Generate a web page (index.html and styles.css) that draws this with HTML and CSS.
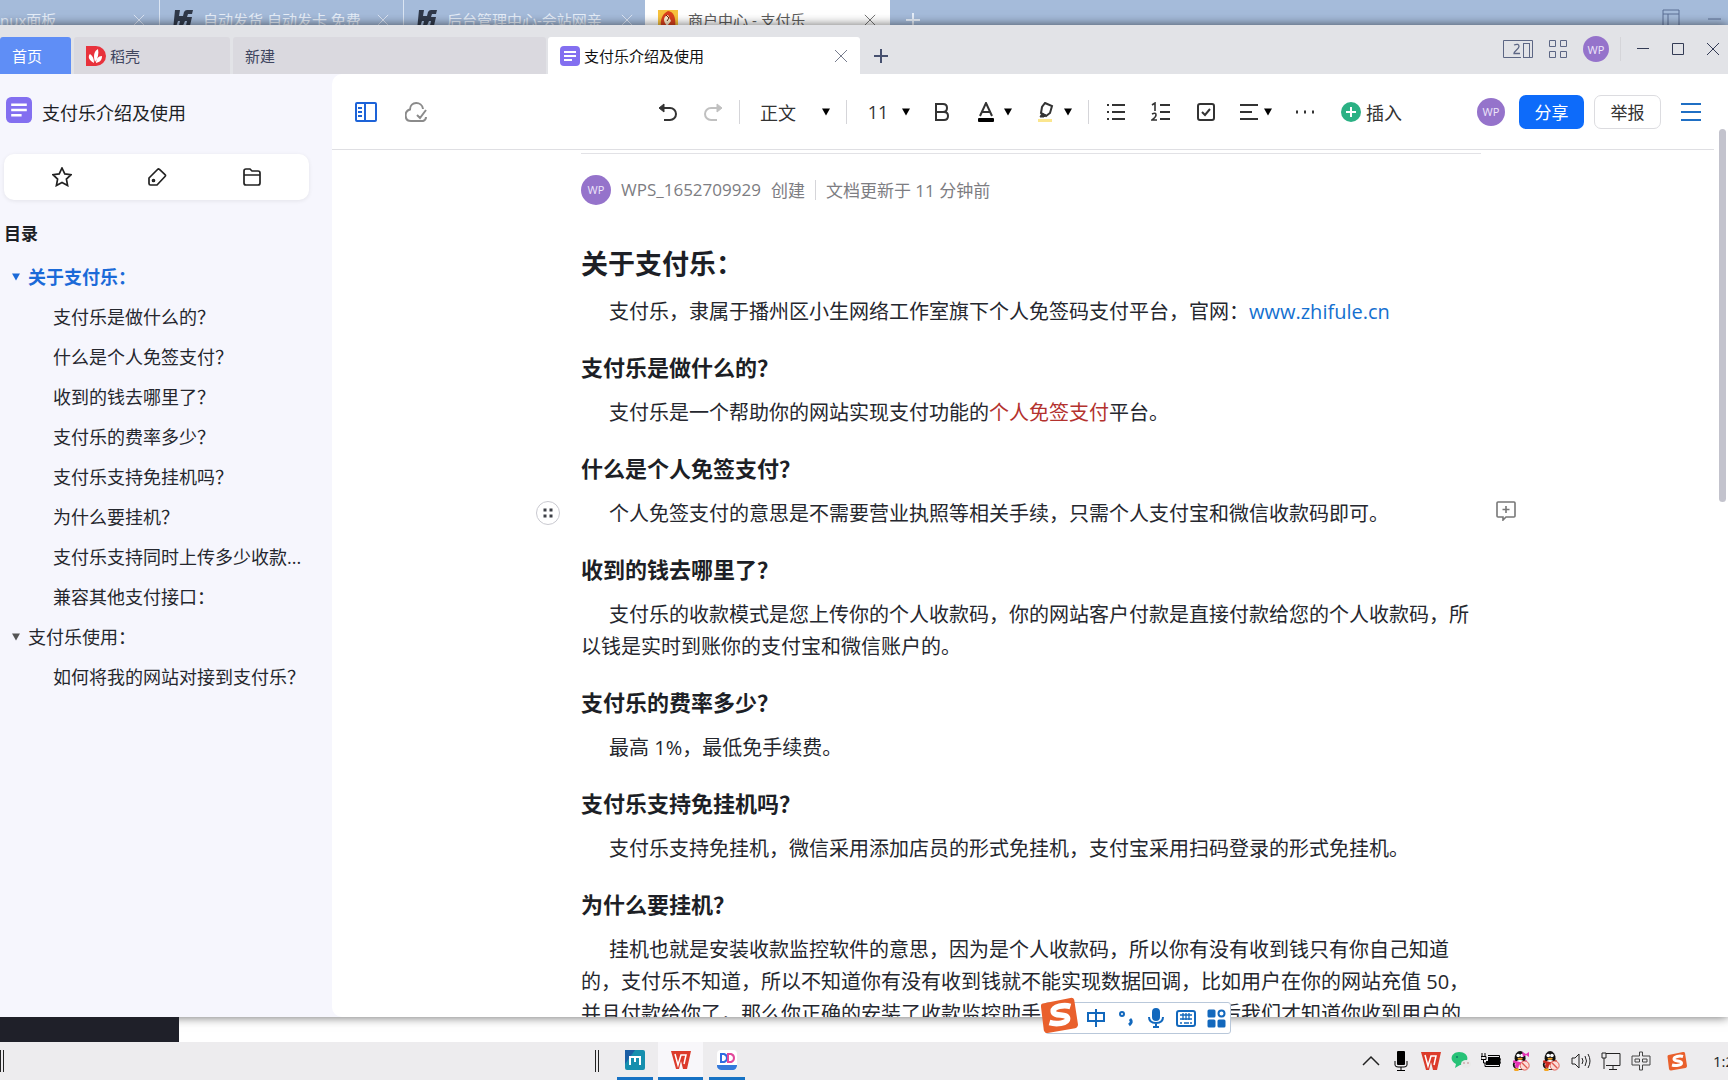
FILE: index.html
```html
<!DOCTYPE html>
<html lang="zh-CN">

<head>
    <meta charset="UTF-8" />
    <meta name="viewport" content="width=device-width, initial-scale=1.0" />
    <title>支付乐介绍及使用</title>
    <link rel="stylesheet" href="styles.css">
</head>

<body>

    <!-- shared icon shapes -->
    <svg class="sprite" aria-hidden="true">
        <symbol id="doc" viewBox="0 0 20 20">
            <rect width="20" height="20" rx="4" fill="#836ff0" />
            <path d="M4 6h12M4 10h12M4 14h8" stroke="#fff" stroke-width="2" />
        </symbol>
        <symbol id="close" viewBox="0 0 14 14">
            <path d="M1 1l12 12M13 1L1 13" fill="none" stroke="currentColor" />
        </symbol>
        <symbol id="plus" viewBox="0 0 14 14">
            <path d="M7 0v14M0 7h14" fill="none" stroke="currentColor" stroke-width="2" />
        </symbol>
        <symbol id="hf" viewBox="0 0 20 20">
            <path d="M2 0h5L6 6h4l1-4q1-2 3-2h6l-1 4h-4l-1 3h5l-3 13h-4l2-9h-2l-4 9H5l2-9H5l-3 9H0z" fill="#30394a" />
        </symbol>
        <symbol id="caret" viewBox="0 0 8 8">
            <path d="M0 .5h8l-4 7z" fill="currentColor" />
        </symbol>
        <symbol id="sogou" viewBox="0 0 40 38">
            <path d="M3 7L32 1q3-1 4 2l4 26q0 3-3 4L8 38q-3 0-4-3L1 10q0-3 2-3z" fill="#e9602c" />
            <path d="M32 10c-7-2-18 0-18 5 0 6 15 2 15 8 0 5-12 6-19 4" fill="none" stroke="#fff" stroke-width="6" />
        </symbol>
        <symbol id="wps" viewBox="0 0 20 20">
            <path d="M0 1h20l-4 18h-4L10 11l-2 8H5z" fill="#dc3b2b" />
            <path d="M4 4l3 11 3-10h5l-2 9" fill="none" stroke="#fff" stroke-width="1.5" />
        </symbol>
        <symbol id="penguin" viewBox="0 0 20 22">
            <ellipse cx="9" cy="8" rx="6" ry="8" fill="#111" />
            <ellipse cx="9" cy="15" rx="8" ry="6" fill="#111" />
            <ellipse cx="9" cy="15" rx="6" ry="5" fill="#fff" />
            <path d="M2 10q7 4 14 0l1 3q-5 3-9 2l-1 4-4-1 1-4-3-2z" fill="currentColor" />
            <circle cx="7" cy="5" r="2" fill="#fff" />
            <circle cx="11" cy="5" r="2" fill="#fff" />
            <ellipse cx="9" cy="8.5" rx="3" ry="1" fill="#f5a623" />
            <path d="M2 20q3-2 6 0l-1 2H3z" fill="#f5a623" />
            <circle cx="14" cy="16" r="5" fill="#fbdcd8" stroke="#e2574c" />
            <path d="M11 13l6 6" stroke="#e2574c" stroke-width="1.5" />
        </symbol>
    </svg>

    <div class="browser">
        <div class="browser-tab first"><span>nux面板</span><svg><use href="#close" /></svg></div>
        <div class="browser-tab second"><svg class="favicon"><use href="#hf" /></svg><span>自动发货 自动发卡 免费</span><svg><use href="#close" /></svg></div>
        <div class="browser-tab third"><svg class="favicon"><use href="#hf" /></svg><span>后台管理中心-会站网亲</span><svg><use href="#close" /></svg></div>
        <div class="browser-tab active">
            <svg class="favicon" viewBox="0 0 20 20">
                <rect width="20" height="20" fill="#f7c13c" />
                <path d="M10 1c7 1 8 8 7 19H4C1 11 4 4 10 1z" fill="#d9401c" />
                <path d="M10 5c-4 1-5 5-3 8l2 3 4-5z" fill="#fff0cf" />
                <path d="M8 5l3 3-2 3" stroke="#6b2415" fill="none" />
            </svg>
            <span>商户中心 - 支付乐</span><svg><use href="#close" /></svg>
        </div>
        <svg class="browser-plus"><use href="#plus" /></svg>
        <svg class="browser-panel" viewBox="0 0 60 16">
            <path d="M1 16V1h16v15M1 5h16M6 5v11M46 10h13" fill="none" stroke="#5a6f94" />
        </svg>
    </div>

    <div class="window">
        <header class="tabs">
            <button class="tab home">首页</button>
            <button class="tab docer">
                <svg viewBox="0 0 20 20">
                    <path d="M0 0h10a10 10 0 0 1 0 20H0z" fill="#e8323c" />
                    <path d="M8 17C2 14 2 10 4 8c3 2 4 5 4 9zM9 16C7 10 8 5 12 3c1 5 0 9-3 13zM10 17c0-4 2-7 6-7 0 4-2 6-6 7z" fill="#fff" />
                </svg>
                稻壳
            </button>
            <button class="tab new">新建</button>
            <div class="tab current">
                <svg><use href="#doc" /></svg>
                <span>支付乐介绍及使用</span>
                <button class="icon-button" aria-label="关闭标签"><svg><use href="#close" /></svg></button>
            </div>
            <button class="icon-button add" aria-label="新建标签"><svg><use href="#plus" /></svg></button>
            <div class="window-tools">
                <svg class="pages" viewBox="0 0 30 18" fill="none" stroke="#5c6684">
                    <path d="M18 17.5H.5V.5h29v17h-3" />
                    <rect x="20.5" y="3.5" width="6" height="14" />
                    <path d="M11 5q5-2 5 1.500C16 9 11 11 11 13.500h6" stroke-width="1.3" />
                </svg>
                <svg class="apps" viewBox="0 0 18 18" fill="none" stroke="#5c6684">
                    <path d="M.5.5h6v6h-6zM11.500.5h6v6h-6zM.5 11.500h6v6h-6zM11.500 11.500h6v6h-6z" />
                </svg>
                <span class="avatar small">WP</span>
                <span class="line"></span>
                <button class="icon-button" aria-label="最小化"><svg viewBox="0 0 14 14"><path d="M1 6.5h12" stroke="#333b55" /></svg></button>
                <button class="icon-button" aria-label="最大化"><svg viewBox="0 0 14 14"><path d="M1.5 1.500h11v11h-11z" fill="none" stroke="#333b55" /></svg></button>
                <button class="icon-button" aria-label="关闭"><svg><use href="#close" /></svg></button>
            </div>
        </header>

        <div class="main">
            <aside class="sidebar">
                <div class="doc-name">
                    <svg><use href="#doc" /></svg>
                    <span>支付乐介绍及使用</span>
                </div>
                <div class="quick">
                    <button class="icon-button" aria-label="收藏">
                        <svg viewBox="0 0 20 20"><path d="M10 1l2.800 5.900 6.200.8-4.600 4.400 1.200 6.400L10 15.400l-5.600 3.100 1.200-6.400L1 7.700l6.200-.8z" /></svg>
                    </button>
                    <button class="icon-button" aria-label="标签">
                        <svg viewBox="0 0 20 20"><path d="M2 11l8.500-8.500q1-1 2 0l5.500 5q1 1 0 2L10 18H3.500Q2 18 2 16.500z" /><circle cx="6.500" cy="13.500" r="1" /></svg>
                    </button>
                    <button class="icon-button" aria-label="文件夹">
                        <svg viewBox="0 0 20 20"><path d="M2 4q0-2 2-2h4l2 2h6q2 0 2 2v10q0 2-2 2H4q-2 0-2-2zM2 8h16" /></svg>
                    </button>
                </div>
                <h2 class="toc-title">目录</h2>
                <nav class="toc">
                    <a class="group on" href="#about"><svg><use href="#caret" /></svg>关于支付乐：</a>
                    <a href="#what">支付乐是做什么的？</a>
                    <a href="#personal">什么是个人免签支付？</a>
                    <a href="#money">收到的钱去哪里了？</a>
                    <a href="#fee">支付乐的费率多少？</a>
                    <a href="#free">支付乐支持免挂机吗？</a>
                    <a href="#why">为什么要挂机？</a>
                    <a href="#about">支付乐支持同时上传多少收款...</a>
                    <a href="#about">兼容其他支付接口：</a>
                    <a class="group" href="#about"><svg><use href="#caret" /></svg>支付乐使用：</a>
                    <a href="#about">如何将我的网站对接到支付乐？</a>
                </nav>
            </aside>

            <section class="editor">
                <div class="toolbar">
                    <div class="left">
                        <button class="icon-button" aria-label="目录栏">
                            <svg viewBox="0 0 22 20" fill="none" stroke="#1d63d8" stroke-width="2">
                                <rect x="1" y="1" width="20" height="18" rx="1" />
                                <path d="M10 1v18M3 6h4M3 10h4M3 14h4" />
                            </svg>
                        </button>
                        <button class="icon-button" aria-label="已保存">
                            <svg viewBox="0 0 22 20" fill="none" stroke="#8b8b8b" stroke-width="2">
                                <path d="M18 7C17-1 5-1 5 7.500-1 9-1 19 6 19h12q3-1 3-4M12 13l3 3 6-8" />
                            </svg>
                        </button>
                    </div>
                    <div class="format">
                        <button class="tool" aria-label="撤销">
                            <svg viewBox="0 0 20 20"><path d="M3 6h9a6 6 0 0 1 0 12H6" /><path d="M1 6l5-4v8z" fill="#333" stroke-width="1" /></svg>
                        </button>
                        <button class="tool faded" aria-label="重做">
                            <svg viewBox="0 0 20 20"><path d="M17 6H8a6 6 0 0 0 0 12h6" /><path d="M19 6l-5-4v8z" fill="#333" stroke-width="1" /></svg>
                        </button>
                        <span class="line"></span>
                        <button class="drop style">正文<svg class="caret"><use href="#caret" /></svg></button>
                        <span class="line"></span>
                        <button class="drop size">11<svg class="caret"><use href="#caret" /></svg></button>
                        <button class="tool" aria-label="加粗">
                            <svg viewBox="0 0 20 20"><path d="M4 2h7q4 0 4 4t-4 4H4zM4 10h8q4 0 4 4t-4 4H4z" /></svg>
                        </button>
                        <button class="drop" aria-label="文字颜色">
                            <svg viewBox="0 0 20 20"><path d="M4 14L10 1l6 13M6 10h8" /><rect x="2" y="16" width="16" height="4" rx="1" fill="#000" stroke="none" /></svg>
                            <svg class="caret"><use href="#caret" /></svg>
                        </button>
                        <button class="drop" aria-label="突出显示">
                            <svg viewBox="0 0 20 20"><rect x="2" y="17" width="14" height="3" fill="#fbe68e" stroke="none" /><path d="M9 1l7 3-2 7-4 3-5-3 1-6z" /><path d="M6 11l-2 4h4l2-2z" fill="#333" stroke-width="1" /></svg>
                            <svg class="caret"><use href="#caret" /></svg>
                        </button>
                        <span class="line"></span>
                        <button class="tool" aria-label="项目符号">
                            <svg viewBox="0 0 20 20"><path d="M6 3h13M6 10h13M6 17h13M1 3h2M1 10h2M1 17h2" /></svg>
                        </button>
                        <button class="tool" aria-label="编号">
                            <svg viewBox="0 0 20 20"><path d="M9 3h10M9 10h10M9 17h10" /><path d="M1 3l3-2v8M1 12q4-2 4 1 0 2-4 5h5" stroke-width="1.6" /></svg>
                        </button>
                        <button class="tool" aria-label="待办">
                            <svg viewBox="0 0 20 20"><rect x="2" y="2" width="16" height="16" rx="2" /><path d="M6 10l3 3 5-6" /></svg>
                        </button>
                        <button class="drop align" aria-label="对齐">
                            <svg viewBox="0 0 20 20"><path d="M1 3h18M1 10h12M1 17h18" /></svg>
                            <svg class="caret"><use href="#caret" /></svg>
                        </button>
                        <button class="tool" aria-label="更多">
                            <svg viewBox="0 0 20 20"><path d="M1 10h2M9 10h2M17 10h2" stroke-width="3" /></svg>
                        </button>
                        <button class="insert">
                            <svg viewBox="0 0 20 20"><circle cx="10" cy="10" r="10" fill="#2bb184" /><path d="M10 5v10M5 10h10" stroke="#fff" stroke-width="2" /></svg>
                            插入
                        </button>
                    </div>
                    <div class="right">
                        <span class="avatar">WP</span>
                        <button class="share">分享</button>
                        <button class="report">举报</button>
                        <button class="icon-button" aria-label="菜单">
                            <svg viewBox="0 0 20 20"><path d="M0 2h20M0 10h20M0 18h20" stroke="#1f6fc4" stroke-width="2" /></svg>
                        </button>
                    </div>
                </div>

                <div class="page">
                    <article class="document">
                        <div class="meta">
                            <span class="avatar">WP</span>
                            <span class="author">WPS_1652709929</span>
                            <span>创建</span>
                            <span class="line"></span>
                            <span>文档更新于 11 分钟前</span>
                        </div>
                        <h1 id="about">关于支付乐：</h1>
                        <p>支付乐，隶属于播州区小生网络工作室旗下个人免签码支付平台，官网：<a href="#about">www.zhifule.cn</a></p>
                        <h2 id="what">支付乐是做什么的？</h2>
                        <p>支付乐是一个帮助你的网站实现支付功能的<em>个人免签支付</em>平台。</p>
                        <h2 id="personal">什么是个人免签支付？</h2>
                        <div class="block">
                            <button class="handle" aria-label="拖动段落">
                                <svg viewBox="0 0 24 24">
                                    <circle cx="12" cy="12" r="11.500" fill="#fff" stroke="#c9c9d0" />
                                    <path d="M7.500 9h3M13.500 9h3M7.500 15h3M13.500 15h3" stroke="#3c3f46" stroke-width="3" />
                                </svg>
                            </button>
                            <p>个人免签支付的意思是不需要营业执照等相关手续，只需个人支付宝和微信收款码即可。</p>
                            <button class="comment" aria-label="评论">
                                <svg viewBox="0 0 20 20" fill="none" stroke="#777" stroke-width="1.6">
                                    <path d="M2 1h16q1 0 1 1v13q0 1-1 1h-8l-3 3v-3H2q-1 0-1-1V2q0-1 1-1zM10 5v7M6.500 8.500h7" />
                                </svg>
                            </button>
                        </div>
                        <h2 id="money">收到的钱去哪里了？</h2>
                        <p>支付乐的收款模式是您上传你的个人收款码，你的网站客户付款是直接付款给您的个人收款码，所以钱是实时到账你的支付宝和微信账户的。</p>
                        <h2 id="fee">支付乐的费率多少？</h2>
                        <p>最高 1%，最低免手续费。</p>
                        <h2 id="free">支付乐支持免挂机吗？</h2>
                        <p>支付乐支持免挂机，微信采用添加店员的形式免挂机，支付宝采用扫码登录的形式免挂机。</p>
                        <h2 id="why">为什么要挂机？</h2>
                        <p>挂机也就是安装收款监控软件的意思，因为是个人收款码，所以你有没有收到钱只有你自己知道的，支付乐不知道，所以不知道你有没有收到钱就不能实现数据回调，比如用户在你的网站充值 50，并且付款给你了，那么你正确的安装了收款监控助手，并且正常的挂机以后我们才知道你收到用户的</p>
                    </article>
                </div>
                <span class="scrollbar"></span>
            </section>
        </div>
    </div>

    <div class="behind"><div class="dark"></div></div>

    <!-- floating input method bar -->
    <div class="ime">
        <svg class="ime-logo"><use href="#sogou" /></svg>
        <svg viewBox="0 0 20 20"><path d="M2 5h16v8H2zM10 1v18" /></svg>
        <svg viewBox="0 0 20 20"><circle cx="6" cy="6" r="2" /><path d="M14 11q3 3-1 6" stroke-width="3" /></svg>
        <svg viewBox="0 0 20 20"><rect x="7" y="1" width="6" height="11" rx="3" fill="#1268bd" /><path d="M3 9q0 6 7 6t7-6M10 15v4M7 19h6" /></svg>
        <svg viewBox="0 0 20 20"><rect x="1" y="3" width="18" height="15" rx="2" /><path d="M4 7h12M4 11h12M4 15h2M8 15h5M14 15h2M7 5v7M10 5v7M13 5v7" stroke-width="1.3" /></svg>
        <svg viewBox="0 0 20 20"><path d="M3 3h5v5H3zM3 13h5v5H3zM13 13h5v5h-5z" fill="#1268bd" stroke-width="3" stroke-linejoin="round" /><circle cx="15.500" cy="5.500" r="3" /></svg>
    </div>

    <footer class="taskbar">
        <span class="grip"></span>
        <span class="grip second-grip"></span>
        <button class="app" aria-label="浏览器">
            <svg viewBox="0 0 20 20"><rect width="20" height="20" rx="2" fill="#168fae" /><path d="M0 0h10L0 14z" fill="#1b5fa5" /><path d="M5 15V7h10v8M10 7v5" fill="none" stroke="#fff" stroke-width="2" /></svg>
        </button>
        <button class="app open" aria-label="WPS"><svg><use href="#wps" /></svg></button>
        <button class="app" aria-label="多多">
            <svg viewBox="0 0 20 20"><rect width="20" height="20" rx="4" fill="#fff" /><path d="M4 4h3q3 1 3 4t-3 4H4z" fill="none" stroke="#2f6be0" stroke-width="2" /><path d="M11 4h3q3 1 3 4t-3 4h-3z" fill="none" stroke="#e2489b" stroke-width="2" /><path d="M0 15h20v1q-1 4-4 4H4q-4-1-4-4z" fill="#3479da" /></svg>
        </button>
        <div class="tray">
            <svg viewBox="0 0 20 20"><path d="M2 14l8-8 8 8" stroke="#222" stroke-width="1.5" /></svg>
            <svg viewBox="0 0 20 20"><rect x="6" y="0" width="8" height="14" rx="1" fill="#000" /><path d="M4 10v4q0 2 3 2h6q3 0 3-2v-4M10 16v3M6 19.500h8" stroke="#000" /></svg>
            <svg><use href="#wps" /></svg>
            <svg viewBox="0 0 20 20"><path d="M8 1c12 0 10 13 1 13l-5 3 1-4C-3 9 1 1 8 1z" fill="#27c277" /><circle cx="6" cy="6" r="1" fill="#176" /><ellipse cx="15" cy="13" rx="5" ry="4" fill="#e9e9e9" /><circle cx="13" cy="12" r="1" fill="#caa" /><circle cx="17" cy="12" r="1" fill="#caa" /></svg>
            <svg viewBox="0 0 20 20"><path d="M7 6h11v8H5v-4h2z" fill="#000" /><path d="M7 4.500h11.500v11H4V12M19 8h1v4h-1M1 2v3M4 2v3M0 5.500h5v3H0zM2.500 9v3H5" stroke="#000" /></svg>
            <svg class="pink" viewBox="0 0 20 20"><use href="#penguin" /><path d="M11 1l4 2 3-2v5l-3-2-3 2z" fill="#e532b4" /></svg>
            <svg class="red"><use href="#penguin" /></svg>
            <svg viewBox="0 0 20 20"><path d="M1 7h3l4-4v14l-4-4H1zM11 7q2 3 0 6M14 5q3 5 0 10M17 3q4 7 0 14" stroke="#222" /></svg>
            <svg viewBox="0 0 20 20"><path d="M5 2.500h14v12H5M8 18.500h8M12 14v4M1 2h4v5H1zM3 7v11" stroke="#222" /></svg>
            <svg viewBox="0 0 20 20"><path d="M1 5h7.500V1h3v4H19v9h-7.500v5h-3v-5H1zM4 8h4.500v3H4zM11.500 8H16v3h-4.500z" stroke="#444" /></svg>
            <svg class="tray-sogou"><use href="#sogou" /></svg>
            <span class="clock">1:2</span>
        </div>
    </footer>

</body>

</html>
```
FILE: styles.css
```css
* {
    box-sizing: border-box;
    margin: 0;
    padding: 0;
}

html,
body {
    height: 100%;
    overflow: hidden;
}

body {
    display: flex;
    flex-direction: column;
    background: #fff;
    color: #1d1f26;
    font-family: "Open Sans", "Noto Sans CJK SC", sans-serif;
    font-size: 17px;
}

button {
    display: flex;
    align-items: center;
    border: none;
    background: none;
    color: inherit;
    font: inherit;
}

a {
    text-decoration: none;
}

svg {
    display: block;
    flex-shrink: 0;
    width: 20px;
    height: 20px;
}

.sprite {
    position: absolute;
    width: 0;
    height: 0;
}

.icon-button {
    flex-shrink: 0;
    justify-content: center;
}

.line {
    flex-shrink: 0;
    width: 1px;
    height: 24px;
    background: #d5d5d9;
}

.avatar {
    display: flex;
    align-items: center;
    justify-content: center;
    flex-shrink: 0;
    width: 28px;
    height: 28px;
    border-radius: 50%;
    background: #9573cb;
    color: #eee6fa;
    font-size: 11px;
}

.avatar.small {
    width: 26px;
    height: 26px;
}

/* browser behind the window */
.browser {
    display: flex;
    flex-shrink: 0;
    height: 25px;
    overflow: hidden;
    background: #a5bbda;
    color: #e6eef9;
    font-size: 15px;
    line-height: 20px;
}

.browser-tab {
    display: flex;
    align-items: flex-start;
    gap: 10px;
    flex-shrink: 0;
    height: 30px;
    padding: 10px 14px 0 13px;
    white-space: nowrap;
}

.browser-tab span {
    flex: 1;
}

.browser-tab svg {
    width: 12px;
    height: 20px;
}

.browser-tab .favicon {
    width: 20px;
}

.browser-tab.first {
    width: 159px;
    padding-left: 0;
}

.browser-tab.second,
.browser-tab.third {
    width: 244px;
    border-left: 1px solid #dbe5f3;
}

.browser-tab.active {
    width: 245px;
    margin-left: -2px;
    background: #fff;
    color: #5d5d5d;
}

.browser-plus {
    width: 14px;
    height: 14px;
    margin: 13px 0 0 16px;
}

.browser-panel {
    width: 60px;
    height: 16px;
    margin: 9px 6px 0 auto;
}

/* wps window */
.window {
    display: flex;
    flex-direction: column;
    flex: 1;
    min-height: 0;
    z-index: 1;
    background: #f6f6fd;
    box-shadow: 0 0 10px rgba(0, 0, 0, 0.6);
}

.tabs {
    display: flex;
    flex-shrink: 0;
    align-items: flex-end;
    height: 49px;
    background: #e2e3e7;
    font-size: 15px;
}

.tab {
    display: flex;
    align-items: center;
    gap: 4px;
    flex-shrink: 0;
    height: 37px;
    margin-right: 3px;
    padding: 0 12px;
    border-radius: 3px 3px 0 0;
    background: #dad9df;
    color: #3f465f;
}

.home {
    width: 71px;
    background: #5f8ef6;
    color: #fff;
}

.docer {
    width: 156px;
}

.new {
    width: 313px;
    margin-right: 2px;
}

.current {
    width: 312px;
    margin-right: 0;
    background: #fff;
    color: #111;
}

.current .icon-button {
    margin-left: auto;
    color: #777c8d;
}

.current .icon-button svg {
    width: 14px;
}

.add {
    width: 42px;
    height: 37px;
    color: #46506f;
}

.add svg {
    width: 14px;
    height: 14px;
}

.window-tools {
    display: flex;
    align-items: center;
    gap: 16px;
    height: 50px;
    margin-left: auto;
    padding-right: 6px;
    color: #333b55;
}

.window-tools .pages {
    width: 30px;
    height: 18px;
}

.window-tools .apps {
    width: 18px;
    height: 18px;
}

.window-tools .line {
    margin: 0 -4px 0 -5px;
}

.window-tools .icon-button {
    width: 19px;
}

.window-tools .icon-button svg {
    width: 14px;
    height: 14px;
}

.main {
    display: flex;
    flex: 1;
    min-height: 0;
}

/* sidebar */
.sidebar {
    flex-shrink: 0;
    width: 332px;
    padding: 20px 23px 0 4px;
}

.doc-name {
    display: flex;
    align-items: center;
    gap: 10px;
    height: 36px;
    padding-left: 2px;
    font-size: 18px;
}

.doc-name svg {
    width: 26px;
    height: 26px;
    margin-top: -4px;
}

.quick {
    display: flex;
    justify-content: space-around;
    align-items: center;
    height: 46px;
    margin: 24px 0 14px;
    padding: 0 10px;
    border-radius: 10px;
    background: #fff;
    box-shadow: 0 1px 4px rgba(0, 0, 0, 0.08);
}

.quick svg {
    fill: none;
    stroke: #222;
    stroke-width: 1.7;
}

.toc-title {
    font-size: 17px;
    line-height: 40px;
}

.toc {
    display: flex;
    flex-direction: column;
    margin-top: 3px;
}

.toc a {
    padding-left: 49px;
    color: #25272e;
    font-size: 18px;
    line-height: 40px;
    white-space: nowrap;
}

.toc .group {
    display: flex;
    align-items: center;
    gap: 8px;
    padding-left: 8px;
}

.toc .group svg {
    width: 8px;
    height: 8px;
    color: #555;
}

.toc .on,
.toc .on svg {
    color: #1b6ad8;
    font-weight: bold;
}

/* editor */
.editor {
    position: relative;
    display: flex;
    flex-direction: column;
    flex: 1;
    min-width: 0;
    border-radius: 10px 0 0 10px;
    background: #fff;
}

.toolbar {
    display: flex;
    align-items: center;
    flex-shrink: 0;
    height: 76px;
    margin-right: 14px;
    border-bottom: 1px solid #dfdfe3;
    color: #333;
}

.toolbar .left {
    display: flex;
    gap: 28px;
    width: 313px;
    padding-left: 23px;
}

.left svg {
    width: 22px;
}

.format {
    display: flex;
    align-items: center;
    font-size: 18px;
}

.format .line {
    margin: 0 4px;
}

.format svg {
    fill: none;
    stroke: #333;
    stroke-width: 2;
}

.format .caret {
    width: 8px;
    height: 8px;
    stroke: none;
    color: #000;
}

.tool {
    justify-content: center;
    width: 45px;
    height: 32px;
}

.tool.faded {
    opacity: 0.3;
}

.drop {
    justify-content: center;
    gap: 8px;
    width: 60px;
    height: 32px;
}

.drop.style {
    justify-content: space-between;
    width: 98px;
    padding: 0 12px 0 16px;
}

.drop.size {
    gap: 14px;
    width: 68px;
    padding-left: 8px;
}

.drop.align {
    gap: 5px;
    width: 54px;
}

.insert {
    gap: 5px;
    padding-left: 14px;
}

.format .insert svg {
    stroke: none;
}

.toolbar .right {
    display: flex;
    align-items: center;
    margin-left: auto;
    padding-right: 13px;
}

.share,
.report {
    justify-content: center;
    height: 34px;
    border-radius: 7px;
}

.share {
    width: 65px;
    margin: 0 10px 0 14px;
    background: #0d6bfa;
    color: #fff;
}

.report {
    width: 67px;
    margin-right: 20px;
    border: 1px solid #dcdce0;
}

.page {
    flex: 1;
    min-height: 0;
    overflow: hidden;
    padding: 3px 247px 0 249px;
}

.scrollbar {
    position: absolute;
    top: 55px;
    right: 2px;
    width: 7px;
    height: 373px;
    border-radius: 4px;
    background: #c3c3cd;
}

.meta {
    display: flex;
    align-items: center;
    gap: 10px;
    height: 72px;
    border-top: 1px solid #e2e2e6;
    color: #7d7d82;
}

.meta .avatar {
    width: 30px;
    height: 30px;
}

.meta .line {
    height: 20px;
}

.document h1 {
    margin-top: 20px;
    font-size: 27px;
    line-height: 38px;
}

.document h2 {
    margin-top: 23px;
    font-size: 22px;
    line-height: 32px;
}

.document p {
    margin-top: 14px;
    color: #25272e;
    font-size: 20px;
    line-height: 32px;
    text-indent: 28px;
}

.document h1 + p {
    margin-top: 13px;
}

.document a {
    color: #1470d0;
}

.document em {
    color: #b3322e;
    font-style: normal;
}

.block {
    position: relative;
}

/* controls hanging in the page margins */
.handle,
.comment {
    position: absolute;
    top: 3px;
}

.handle {
    left: -45px;
}

.handle svg {
    width: 24px;
    height: 24px;
}

.comment {
    right: -35px;
}

/* desktop below the window */
.behind {
    flex-shrink: 0;
    height: 25px;
    background: #fff;
}

.dark {
    position: relative;
    z-index: 2;
    width: 179px;
    height: 25px;
    background: #1f2029;
}

.ime {
    position: absolute;
    right: 497px;
    bottom: 46px;
    z-index: 3;
    display: flex;
    align-items: center;
    gap: 10px;
    height: 32px;
    padding-right: 4px;
    border: 1px solid #b9c8da;
    border-radius: 3px;
    background: #fff;
}

.ime svg {
    fill: none;
    stroke: #1268bd;
    stroke-width: 2;
}

.ime .ime-logo {
    width: 38px;
    height: 38px;
    margin: -6px -2px 0 -6px;
    stroke: none;
}

/* taskbar */
.taskbar {
    display: flex;
    flex-shrink: 0;
    align-items: center;
    height: 38px;
    background: #edecee;
}

.grip {
    width: 4px;
    height: 22px;
    border: 1px solid #222;
    border-width: 0 1px;
}

.second-grip {
    margin: 0 18px 0 591px;
}

.app {
    justify-content: center;
    width: 36px;
    height: 38px;
    border-bottom: 3px solid #1672c4;
}

.app.open {
    width: 45px;
    margin: 0 6px 0 5px;
    background: #f8f7fa;
}

.tray {
    display: flex;
    align-items: center;
    gap: 10px;
    margin-left: auto;
}

.tray svg {
    fill: none;
}

.tray .pink {
    color: #e532b4;
}

.tray .red {
    color: #c92b22;
}

.tray .tray-sogou {
    margin-left: 6px;
}

.clock {
    width: 15px;
    margin-left: 16px;
    overflow: hidden;
    font-size: 15px;
    white-space: nowrap;
}
```
